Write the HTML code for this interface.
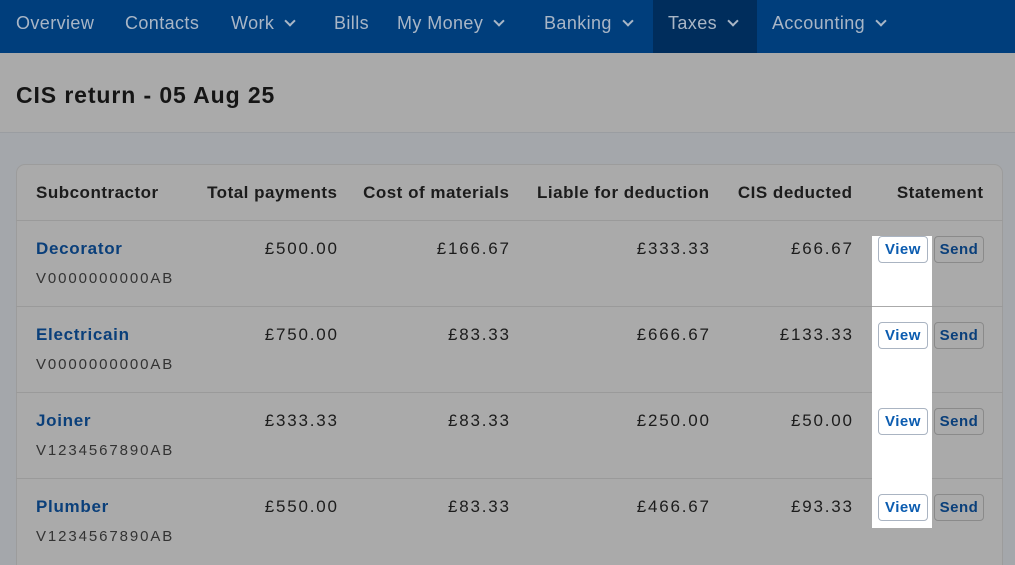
<!DOCTYPE html>
<html><head><style>
*{margin:0;padding:0;box-sizing:border-box}
html,body{width:1015px;height:565px;overflow:hidden}
body{background:#a4a7ab;font-family:"Liberation Sans",sans-serif;position:relative}
.nav{position:absolute;left:0;top:0;width:1015px;height:53px;background:#003e7c;color:#a9b6c6;font-size:18px;letter-spacing:0.4px}
.nav span{position:absolute;top:13px}
.nav .act{position:absolute;left:653px;top:0;width:104px;height:53px;background:#002d5c}
.chev{display:inline-block;width:8px;height:8px;border-right:2px solid #a9b6c6;border-bottom:2px solid #a9b6c6;transform:rotate(45deg);margin-left:12px;position:relative;top:-4px}
.hdr{position:absolute;top:53px;left:0;width:1015px;height:80px;background:#aaaaaa;border-bottom:1px solid #9a9da1}
.hdr h1{position:absolute;left:16px;top:29px;font-size:23px;color:#151515;font-weight:bold;letter-spacing:0.9px}
.card{position:absolute;left:16px;top:164px;width:987px;height:410px;background:#aaaaaa;border:1px solid #9c9c9c;border-radius:9px}
.t{position:absolute;font-size:17px;color:#1c1c1c;white-space:nowrap}
.b{font-weight:bold;letter-spacing:0.5px}
.n{letter-spacing:1.8px;margin-right:-1.8px}
.line{position:absolute;left:16px;width:987px;height:1px;background:#9a9a9a}
.name{color:#0a3f7a;font-weight:bold;letter-spacing:0.7px}
.code{font-size:15px;color:#333;letter-spacing:1.9px}
.hl{position:absolute;left:872px;width:60px;background:#fff}
.btn{position:absolute;width:50px;height:27px;border-radius:4px;font-size:15px;font-weight:bold;text-align:center;line-height:25px;letter-spacing:0.5px}
.v{border:1px solid #aab4c2;background:#fff;color:#0b5cb0}
.s{border:1px solid #8a8a8a;background:#aaaaaa;color:#0a3f7a;left:934px}
</style></head><body>
<div class="nav"><div class="act"></div>
<span style="left:16px">Overview</span><span style="left:125px">Contacts</span>
<span style="left:231px">Work<i class="chev"></i></span><span style="left:334px">Bills</span>
<span style="left:397px">My Money<i class="chev"></i></span><span style="left:544px">Banking<i class="chev"></i></span>
<span style="left:668px">Taxes<i class="chev"></i></span><span style="left:772px">Accounting<i class="chev"></i></span>
</div>
<div class="hdr"><h1>CIS return - 05 Aug 25</h1></div>
<div class="card"></div>
<div class="hl" style="top:236px;height:70px"></div>
<div class="hl" style="top:307px;height:221px"></div>
<div class="t b" style="left:36px;top:183px">Subcontractor</div>
<div class="t b" style="right:678px;top:183px;margin-right:-0.5px">Total payments</div>
<div class="t b" style="right:506px;top:183px;margin-right:-0.5px">Cost of materials</div>
<div class="t b" style="right:306px;top:183px;margin-right:-0.5px">Liable for deduction</div>
<div class="t b" style="right:163px;top:183px;margin-right:-0.5px">CIS deducted</div>
<div class="t b" style="right:32px;top:183px;margin-right:-0.5px">Statement</div>
<div class="line" style="top:220px"></div>
<div class="line" style="top:306px;width:856px"></div><div class="line" style="top:306px;left:932px;width:71px"></div>
<div class="line" style="top:392px;width:856px"></div><div class="line" style="top:392px;left:932px;width:71px"></div>
<div class="line" style="top:478px;width:856px"></div><div class="line" style="top:478px;left:932px;width:71px"></div>

<div class="t name" style="left:36px;top:239px">Decorator</div><div class="t code" style="left:36px;top:270px">V0000000000AB</div>
<div class="t n" style="right:678px;top:239px">£500.00</div><div class="t n" style="right:506px;top:239px">£166.67</div><div class="t n" style="right:306px;top:239px">£333.33</div><div class="t n" style="right:163px;top:239px">£66.67</div>
<div class="btn v" style="left:878px;top:236px">View</div><div class="btn s" style="top:236px">Send</div>

<div class="t name" style="left:36px;top:325px">Electricain</div><div class="t code" style="left:36px;top:356px">V0000000000AB</div>
<div class="t n" style="right:678px;top:325px">£750.00</div><div class="t n" style="right:506px;top:325px">£83.33</div><div class="t n" style="right:306px;top:325px">£666.67</div><div class="t n" style="right:163px;top:325px">£133.33</div>
<div class="btn v" style="left:878px;top:322px">View</div><div class="btn s" style="top:322px">Send</div>

<div class="t name" style="left:36px;top:411px">Joiner</div><div class="t code" style="left:36px;top:442px">V1234567890AB</div>
<div class="t n" style="right:678px;top:411px">£333.33</div><div class="t n" style="right:506px;top:411px">£83.33</div><div class="t n" style="right:306px;top:411px">£250.00</div><div class="t n" style="right:163px;top:411px">£50.00</div>
<div class="btn v" style="left:878px;top:408px">View</div><div class="btn s" style="top:408px">Send</div>

<div class="t name" style="left:36px;top:497px">Plumber</div><div class="t code" style="left:36px;top:528px">V1234567890AB</div>
<div class="t n" style="right:678px;top:497px">£550.00</div><div class="t n" style="right:506px;top:497px">£83.33</div><div class="t n" style="right:306px;top:497px">£466.67</div><div class="t n" style="right:163px;top:497px">£93.33</div>
<div class="btn v" style="left:878px;top:494px">View</div><div class="btn s" style="top:494px">Send</div>
</body></html>
